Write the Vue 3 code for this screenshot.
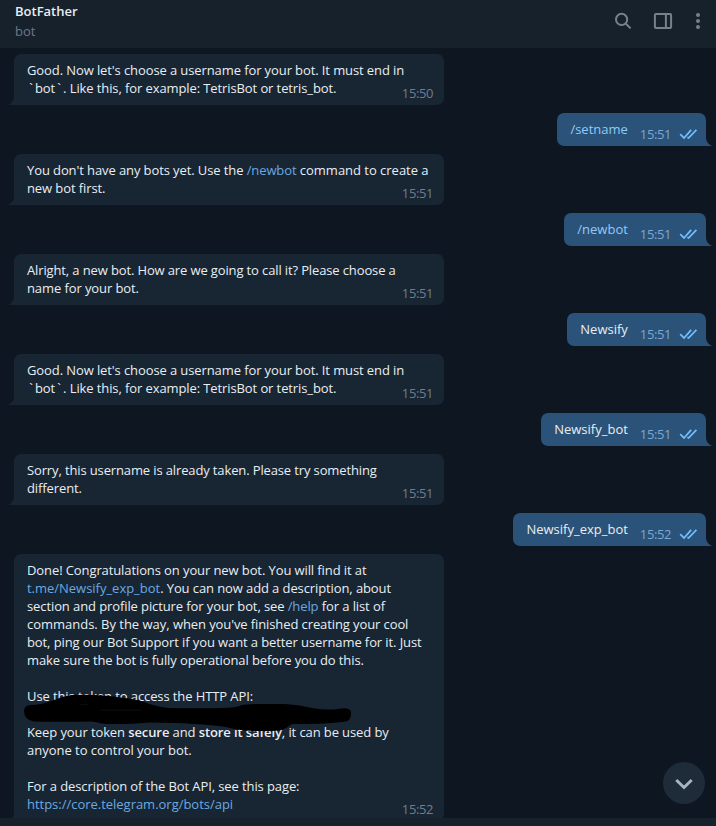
<script setup>
import { ref } from 'vue'

// Each message is a list of lines, each line is a list of text parts
const messages = ref([
  {
    id: 1,
    time: '15:50',
    lines: [
      [{ text: "Good. Now let's choose a username for your bot. It must end in" }],
      [
        { text: '`', type: 'tick' },
        { text: 'bot' },
        { text: '`', type: 'tick' },
        { text: '. Like this, for example: TetrisBot or tetris_bot.' }
      ]
    ]
  },
  { id: 2, out: true, time: '15:51', lines: [[{ text: '/setname', type: 'command' }]] },
  {
    id: 3,
    time: '15:51',
    lines: [
      [
        { text: "You don't have any bots yet. Use the " },
        { text: '/newbot', type: 'link' },
        { text: ' command to create a', type: 'loose' }
      ],
      [{ text: 'new bot first.' }]
    ]
  },
  { id: 4, out: true, time: '15:51', lines: [[{ text: '/newbot', type: 'command' }]] },
  {
    id: 5,
    time: '15:51',
    lines: [
      [{ text: 'Alright, a new bot. How are we going to call it? Please choose a', type: 'tight' }],
      [{ text: 'name for your bot.' }]
    ]
  },
  { id: 6, out: true, time: '15:51', lines: [[{ text: 'Newsify' }]] },
  {
    id: 7,
    time: '15:51',
    lines: [
      [{ text: "Good. Now let's choose a username for your bot. It must end in" }],
      [
        { text: '`', type: 'tick' },
        { text: 'bot' },
        { text: '`', type: 'tick' },
        { text: '. Like this, for example: TetrisBot or tetris_bot.' }
      ]
    ]
  },
  { id: 8, out: true, time: '15:51', lines: [[{ text: 'Newsify_bot' }]] },
  {
    id: 9,
    time: '15:51',
    lines: [
      [{ text: 'Sorry, this username is already taken. Please try something', type: 'tight' }],
      [{ text: 'different.' }]
    ]
  },
  { id: 10, out: true, time: '15:52', lines: [[{ text: 'Newsify_exp_bot' }]] },
  {
    id: 11,
    time: '15:52',
    redacted: true,
    lines: [
      [{ text: 'Done! Congratulations on your new bot. You will find it at' }],
      [
        { text: 't.me/Newsify_exp_bot', type: 'link loose' },
        { text: '. You can now add a description, about' }
      ],
      [
        { text: 'section and profile picture for your bot, see ' },
        { text: '/help', type: 'link' },
        { text: ' for a list of' }
      ],
      [
        { text: 'commands. By the way, ', type: 'loose' },
        { text: "when you've finished creating your cool" }
      ],
      [{ text: 'bot, ping our Bot Support if you want a better username for it. Just' }],
      [{ text: 'make sure the bot is fully operational before you do this.' }],
      [],
      [{ text: 'Use this token to access the HTTP API:' }],
      [],
      [
        { text: 'Keep your token ' },
        { text: 'secure', type: 'bold' },
        { text: ' and ' },
        { text: 'store it safely', type: 'bold' },
        { text: ', it can be used by' }
      ],
      [{ text: 'anyone to control your bot.', type: 'loose' }],
      [],
      [{ text: 'For a description of the Bot API, see this page:' }],
      [{ text: 'https://core.telegram.org/bots/api', type: 'link loose' }]
    ]
  }
])
</script>

<template>
  <div class="app">
    <header class="topbar">
      <div class="peer">
        <div class="peer-name">BotFather</div>
        <div class="peer-status">bot</div>
      </div>
      <div class="actions">
        <svg class="icon" width="20" height="20" viewBox="0 0 20 20">
          <circle cx="8.6" cy="8.4" r="5.6" />
          <path d="M12.7 12.5L17.6 17.4" />
        </svg>
        <svg class="icon" width="20" height="20" viewBox="0 0 20 20">
          <rect x="1.9" y="2.9" width="16.2" height="14.2" rx="1" />
          <path d="M12.9 3V17" />
        </svg>
        <svg class="icon dots" width="6" height="20" viewBox="0 0 6 20">
          <circle cx="3" cy="4" r="2" />
          <circle cx="3" cy="10" r="2" />
          <circle cx="3" cy="16" r="2" />
        </svg>
      </div>
    </header>

    <main class="chat">
      <div
        v-for="msg in messages"
        :key="msg.id"
        class="bubble"
        :class="msg.out ? 'outgoing' : 'incoming'"
      >
        <div class="text">
          <div v-for="(line, i) in msg.lines" :key="i" class="line">
            <span v-for="(part, j) in line" :key="j" :class="part.type">{{ part.text }}</span>
          </div>
        </div>

        <div class="meta">
          <span>{{ msg.time }}</span>
          <svg v-if="msg.out" class="checks" width="20" height="12" viewBox="0 0 20 12">
            <path d="M1.2 6.2L5 10L12.2 1.8" />
            <path d="M8.4 9.4L9.6 10L17.4 1.8" />
          </svg>
        </div>

        <svg class="tail" width="6" height="9" viewBox="0 0 6 9">
          <path d="M0 0C0 4 2 7.2 5.6 8.5Q5.6 9 5 9H0Z" />
        </svg>

        <!-- Marker stroke hiding the token -->
        <svg v-if="msg.redacted" class="scribble" width="330" height="38" viewBox="22 694 330 38">
          <path
            d="M24 711Q24 706 30 705Q42 705 54 700Q64 696 72 695Q100 694 120 697.500Q136 699 144 702Q154 706 168 708Q200 708.500 222 708Q236 708 242 705Q250 703.500 285 704Q300 705 312 708Q326 710.500 338 709Q350 706.500 351 712Q351.500 720 346 721.500Q330 724 292 724Q286 729 280 730.500Q264 731.500 244 730.500Q236 730 226 727Q200 723 150 722.500Q118 725 102 723.500Q96 722 92 721.500Q60 722 34 721.500Q24 720 24 711Z"
          />
          <path class="gap" d="M80 704.700H88M101 710.200H141" />
        </svg>
      </div>

      <button class="scroll-down" aria-label="Scroll down">
        <svg width="20" height="14" viewBox="0 0 20 14">
          <path d="M2.300 3L10 10.500L17.700 3" />
        </svg>
      </button>
    </main>

    <footer class="composer"></footer>
  </div>
</template>

<style>
body {
  margin: 0;
  background: #0e1621;
}
</style>

<style scoped>
.app {
  display: flex;
  flex-direction: column;
  height: 826px;
  overflow: hidden;
  background: #0e1621;
  color: #e9eef2;
  font-family: 'Open Sans', 'Noto Sans', sans-serif;
  font-size: 13px;
  line-height: 18px;
}

.topbar {
  display: flex;
  justify-content: space-between;
  flex: none;
  height: 48px;
  padding: 1px 15px 0;
  box-sizing: border-box;
  background: #17212b;
}

.peer-name {
  font-weight: 600;
  line-height: 20px;
}

.peer-status {
  color: #6c7883;
  line-height: 20px;
}

.actions {
  display: flex;
  align-items: center;
  gap: 20px;
  height: 40px;
}

.icon {
  fill: none;
  stroke: #75818b;
  stroke-width: 2;
}

.dots {
  margin-left: 2px;
  fill: #75818b;
  stroke: none;
}

.chat {
  position: relative;
  flex: 1;
  display: flex;
  flex-direction: column;
  gap: 8px;
  min-height: 0;
  padding: 6px 10px 0 14px;
  overflow: hidden;
}

.bubble {
  position: relative;
  display: flex;
  flex: none;
  box-sizing: border-box;
  padding: 7px 11px 8px 13px;
}

.incoming {
  align-self: flex-start;
  width: 430px;
  border-radius: 7px 7px 7px 0;
  background: #182533;
}

.outgoing {
  align-self: flex-end;
  gap: 12px;
  padding-right: 7px;
  border-radius: 7px 7px 0 7px;
  background: #2b5278;
}

.text {
  white-space: pre;
}

.incoming .text {
  letter-spacing: -0.1px;
}

.line {
  height: 18px;
}

.link {
  color: #6aa9e0;
}

.command {
  color: #8fcbfa;
}

.bold {
  font-weight: 600;
}

.tight {
  letter-spacing: -0.13px;
}

.loose {
  letter-spacing: -0.02px;
}

.tick {
  display: inline-block;
  width: 8px;
  text-align: center;
}

.meta {
  display: flex;
  align-self: flex-end;
  gap: 8px;
  margin-bottom: -5px;
  color: #6d7f8f;
  letter-spacing: -0.4px;
}

.incoming .meta {
  position: absolute;
  right: 11px;
  bottom: 8px;
}

.outgoing .meta {
  color: #7da8d3;
}

.checks {
  margin-top: 3px;
  fill: none;
  stroke: #72bcfd;
  stroke-width: 1.8;
}

.tail {
  position: absolute;
  bottom: 0;
}

.incoming .tail {
  left: -6px;
  transform: scaleX(-1);
  fill: #182533;
}

.outgoing .tail {
  right: -6px;
  fill: #2b5278;
}

.scribble {
  position: absolute;
  left: 8px;
  top: 140px;
  fill: #000;
}

.gap {
  stroke: #14191e;
  stroke-width: 0.6;
}

.scroll-down {
  position: absolute;
  right: 11px;
  bottom: 14px;
  display: flex;
  align-items: center;
  justify-content: center;
  width: 42px;
  height: 42px;
  padding: 2px 0 0;
  border: none;
  border-radius: 50%;
  background: #1e2c3a;
  cursor: pointer;
}

.scroll-down path {
  fill: none;
  stroke: #a8b5c0;
  stroke-width: 3;
}

.composer {
  flex: none;
  height: 8px;
  background: #17212b;
}
</style>
